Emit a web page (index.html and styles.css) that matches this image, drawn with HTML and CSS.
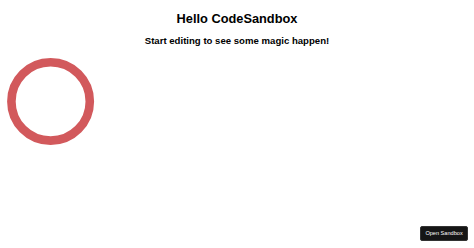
FILE: index.html
```html
<!DOCTYPE html>
<html>
<head>
<meta charset="utf-8">
<link rel="stylesheet" href="styles.css">
</head>
<body>
<div class="app">
  <h1 class="title">Hello CodeSandbox</h1>
  <h2 class="subtitle">Start editing to see some magic happen!</h2>
  <svg class="ring" width="96" height="96" viewBox="0 0 96 96">
    <circle cx="47.6" cy="47.4" r="39.2" fill="none" stroke="#d2595c" stroke-width="8.6"/>
  </svg>
</div>
<a class="open-btn">Open Sandbox</a>
</body>
</html>
```
FILE: styles.css
```css
html, body {
  background: #ffffff;
}
body {
  margin: 3.2px;
  font-family: "Liberation Sans", Arial, sans-serif;
  color: #000;
}
.app {
  display: block;
}
.title {
  font-size: 12.8px;
  font-weight: bold;
  text-align: center;
  margin: 8.6px 0;
  line-height: 14.7px;
}
.subtitle {
  font-size: 9.6px;
  font-weight: bold;
  text-align: center;
  margin: 8px 0;
  line-height: 11px;
}
.ring {
  display: block;
  margin-top: 1.5px;
}
.open-btn {
  position: fixed;
  right: 6px;
  bottom: 6.8px;
  background: #151515;
  color: #fff;
  font-family: "Liberation Sans", Arial, sans-serif;
  font-size: 5.6px;
  line-height: 7px;
  padding: 3px 4.3px;
  border-radius: 2px;
  border: 0.5px solid #333;
}
```
